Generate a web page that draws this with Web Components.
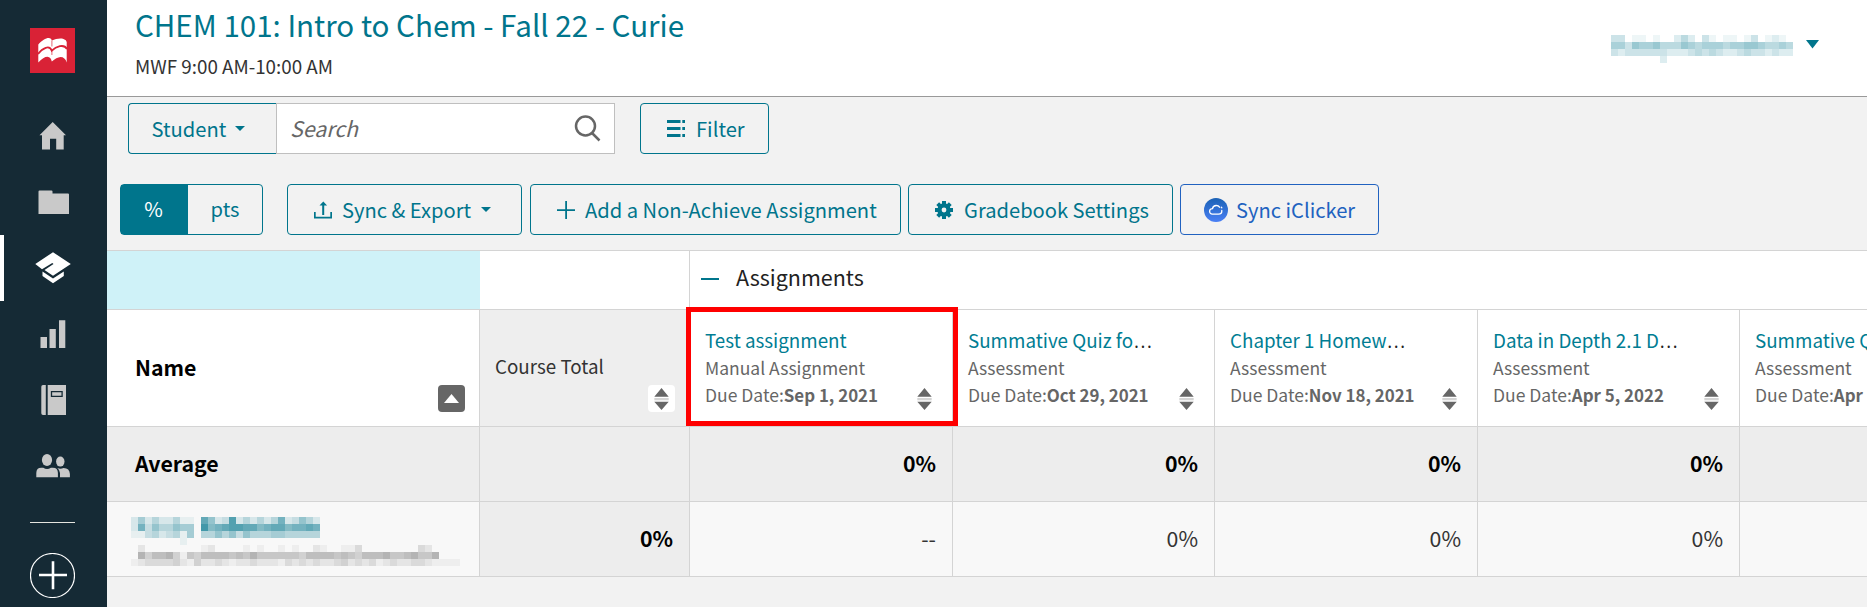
<!DOCTYPE html>
<html lang="en">
<head>
<meta charset="utf-8">
<title>Gradebook</title>
<style>
    body {
        margin: 0;
        width: 1867px;
        height: 607px;
        overflow: hidden;
        display: flex;
        background: #f2f2f2;
        color: #333;
        font-family: "Noto Sans CJK SC", "Noto Sans", sans-serif;
        font-size: 20.15px;
        --teal: #00758c;
        --line: #d4d4d4;
    }

    main {
        flex: 1;
        min-width: 0;
    }
</style>
</head>
<body>
<nav-rail></nav-rail>
<main>
    <course-header>
        <span slot="title">CHEM 101: Intro to Chem - Fall 22 - Curie</span>
        <span slot="schedule">MWF 9:00 AM-10:00 AM</span>
    </course-header>
    <grade-toolbar></grade-toolbar>
    <grade-table></grade-table>
</main>

<script>
const ICONS = {
    logo: [45, 45, `<rect width="45" height="45" fill="#d92236"/>
        <path fill="#fff" d="M8.300 16.500C12 12.500 16 9.800 19 10q2.500.2 2.900 2.600C25.500 11 30 10 33.500 11q3 .8 3.200 3v20.500q-1.700-5.500-6.200-5.500-4 .3-8.700 4.500-1-4.500-4.300-4.800-4 0-9.200 5.800z"/>
        <path fill="none" stroke="#d92236" stroke-width="1.800" d="M8 26C12.500 20 19.500 16.500 21.800 22.700 26 18.500 34 15.500 37 21"/>
        <path fill="none" stroke="#d92236" stroke-width=".7" d="M21.900 12.500v6M21.900 22v5"/>`],
    home: [28, 28, `<path d="M13.700 0 27 13.200h-2.300V27.500h-7.500V16.700H11v10.800H3V13.200H.5z"/>`],
    folder: [31, 25, `<path d="M.5 1.500Q.5.5 1.500.5h12q1 0 1 1v2H30q1 0 1 1V24H.5z"/>`],
    grades: [36, 32, `<path d="M18 .2 35.800 12 18 23.800 9.500 18 18.500 12l-1.200-.9L7 17.200.3 12z"/>
        <path d="m7.500 19.500 10.500 7 10.800-7V24L18 31.200 7.500 24z"/>`],
    bars: [26, 28, `<path d="M.5 17H7v11H.5zM9.500 9h6.300v19H9.500zM19 .3h6.300V28H19z"/>`],
    book: [25, 30, `<path d="M2 0h2.800v30H2q-1.700 0-1.700-1.700V1.700Q.3 0 2 0zM6.700 0H25v30H6.700z"/>
        <path fill="#c9c9c9" stroke="#152a35" stroke-width="1.300" d="M10.500 6.700h10.600v4.600H10.500z"/>`],
    people: [35, 24, `<ellipse cx="11" cy="6" rx="5.100" ry="5.900"/><ellipse cx="24.300" cy="7.600" rx="4.200" ry="5"/>
        <path d="M.3 23.300V19q0-5.300 5-5.300h2q3.700 2.400 7.600 0h2q5 0 5 5.300v4.300zM21.300 14q3 1.400 6.300 0 6 0 6.300 6v3.300H24V19q-.2-3-2.700-5z"/>`],
    add: [45, 45, `<circle cx="22.500" cy="22.500" r="22" fill="none" stroke="#fff" stroke-width="1.200"/>
        <path fill="none" stroke="#fff" stroke-width="2.600" d="M9 22h28M23 8.300v28"/>`],
    search: [27, 27, `<g fill="none" stroke="#666" stroke-width="2.500"><circle cx="11.500" cy="11" r="9.500"/><path d="m18 18 7.500 7.500"/></g>`],
    filter: [18, 18, `<path d="M0 0h13.500v3H0zM0 7h13.500v3H0zM0 14h13.500v3H0zM15.300 0H18v3h-2.700zM15.300 7H18v3h-2.700zM15.300 14H18v3h-2.700z"/>`],
    upload: [18, 18, `<path d="M0 11h1.700v4.700h14.600V11H18v6.500H0zM8.200 14V4.500H5.500L9.300.5l3.800 4h-2.900V14z"/>`],
    plus: [18, 18, `<path d="M8.200 0h1.800v8.200h8V10h-8v8H8.200v-8H0V8.200h8.200z"/>`],
    gear: [18, 18, `<path fill="none" stroke="currentColor" stroke-width="4" d="M9 0v18M0 9h18M2.700 2.700l12.600 12.600M15.300 2.700 2.700 15.300"/>
        <circle cx="9" cy="9" r="6.700"/><circle cx="9" cy="9" r="2.400" fill="#f2f2f2"/>`],
    clicker: [24, 24, `<defs><linearGradient id="g" x2="0" y2="1"><stop stop-color="#1b62b5"/><stop offset="1" stop-color="#4a80f5"/></linearGradient></defs>
        <circle cx="12" cy="12" r="12" fill="url(#g)"/>
        <path fill="none" stroke="#fff" stroke-width="1.300" stroke-linecap="round" d="M17.800 12.500q.3 3.700-3.300 3.700H8.300a2.800 2.800 0 0 1 .2-5.600q.5-3.100 3.700-3.100 2.300 0 3.300 1.700M17.300 9.200l.5.500"/>`],
    minus: [18, 2, `<path d="M0 0h18v2H0z"/>`],
    caret: [10, 5, `<path d="M0 0h10L5 5z"/>`],
    bigCaret: [13, 9, `<path d="M0 0h13L6.500 8.500z"/>`],
    up: [15, 9, `<path d="M7.500 0 15 9H0z"/>`],
    sort: [15, 22, `<path d="M7.500 0 14.700 8.700H.3zM.3 13.700h14.400L7.500 22z"/><path fill="#d4d4d4" d="M.3 10h14.400v2.300H.3z"/>`],
};

class UiIcon extends HTMLElement {
    connectedCallback() {
        const [width, height, body] = ICONS[this.getAttribute("name")];
        this.attachShadow({ mode: "open" }).innerHTML = `
            <style>
                :host { display: block; flex: none; width: ${width}px; height: ${height}px; }
                svg { display: block; fill: currentColor; }
            </style>
            <svg width="${width}" height="${height}" viewBox="0 0 ${width} ${height}">${body}</svg>
        `;
    }
}

// Hides a private name: each digit is the strength of one 7px square.
class PrivacyMask extends HTMLElement {
    connectedCallback() {
        const rows = this.getAttribute("rows").split(" ");
        const cols = Math.max(...rows.map((row) => row.length));
        const cells = rows.flatMap((row, y) =>
            [...row].map((v, x) =>
                `<rect x="${x * 7}" y="${y * 7}" width="7" height="7" opacity="${parseInt(v, 16) / 15}"/>`,
            ),
        );
        this.attachShadow({ mode: "open" }).innerHTML = `
            <style>
                :host { display: block; width: ${cols * 7}px; height: ${rows.length * 7}px; }
                svg { display: block; fill: currentColor; }
            </style>
            <svg width="${cols * 7}" height="${rows.length * 7}" shape-rendering="crispEdges">${cells.join("")}</svg>
        `;
    }
}

class NavItem extends HTMLElement {
    connectedCallback() {
        this.attachShadow({ mode: "open" }).innerHTML = `
            <style>
                :host {
                    box-sizing: border-box;
                    display: flex;
                    align-items: center;
                    justify-content: center;
                    height: 66px;
                    padding-right: 5px;
                    border-left: 4px solid transparent;
                    color: #c9c9c9;
                }
                :host([active]) { border-color: #fff; color: #fff; }
            </style>
            <ui-icon name="${this.getAttribute("icon")}"></ui-icon>
        `;
    }
}

class NavRail extends HTMLElement {
    connectedCallback() {
        this.attachShadow({ mode: "open" }).innerHTML = `
            <style>
                :host { display: block; flex: none; width: 107px; height: 607px; background: #152a35; }
                .logo { padding: 28px 0 30px 30px; }
                hr { width: 45px; height: 1px; margin: 23px 0 30px 30px; border: 0; background: #e5e5e0; }
                .add { margin-left: 30px; }
            </style>
            <div class="logo"><ui-icon name="logo"></ui-icon></div>
            <nav-item icon="home"></nav-item>
            <nav-item icon="folder"></nav-item>
            <nav-item icon="grades" active></nav-item>
            <nav-item icon="bars"></nav-item>
            <nav-item icon="book"></nav-item>
            <nav-item icon="people"></nav-item>
            <hr>
            <ui-icon class="add" name="add"></ui-icon>
        `;
    }
}

class CourseHeader extends HTMLElement {
    connectedCallback() {
        this.attachShadow({ mode: "open" }).innerHTML = `
            <style>
                :host {
                    box-sizing: border-box;
                    display: flex;
                    justify-content: space-between;
                    height: 97px;
                    padding: 0 48px 0 28px;
                    background: #fff;
                    border-bottom: 1px solid #999;
                }
                h1 { margin: 5px 0 0; font-size: 29.55px; font-weight: 400; line-height: 40px; color: var(--teal); }
                p { margin: 8px 0 0; font-size: 18.8px; line-height: 26px; }
                .user { display: flex; gap: 13px; padding-top: 35px; color: var(--teal); }
                .user ui-icon { margin-top: 5px; }
            </style>
            <div>
                <h1><slot name="title"></slot></h1>
                <p><slot name="schedule"></slot></p>
            </div>
            <div class="user">
                <privacy-mask rows="33011010024203101101301210 55365564446545554556654454 32333333222343432234332322 00000002"></privacy-mask>
                <ui-icon name="bigCaret"></ui-icon>
            </div>
        `;
    }
}

class ToolButton extends HTMLElement {
    connectedCallback() {
        const icon = this.getAttribute("icon");
        this.attachShadow({ mode: "open" }).innerHTML = `
            <style>
                :host {
                    box-sizing: border-box;
                    display: flex;
                    align-items: center;
                    gap: 11px;
                    height: 51px;
                    padding-left: 26px;
                    border: 1px solid currentColor;
                    border-radius: 4px;
                    color: var(--teal);
                    line-height: 48px;
                    white-space: nowrap;
                }
            </style>
            ${icon ? `<ui-icon name="${icon}"></ui-icon>` : ""}
            <span><slot></slot></span>
            ${this.hasAttribute("menu") ? `<ui-icon name="caret"></ui-icon>` : ""}
        `;
    }
}

class SearchField extends HTMLElement {
    connectedCallback() {
        this.attachShadow({ mode: "open" }).innerHTML = `
            <style>
                :host {
                    box-sizing: border-box;
                    display: flex;
                    align-items: center;
                    justify-content: space-between;
                    width: 339px;
                    height: 51px;
                    padding: 0 13px;
                    border: 1px solid #bfbfbf;
                    background: #fff;
                    color: #666;
                    line-height: 48px;
                }
                span { margin-bottom: 2px; font-style: italic; font-size: 21.3px; }
            </style>
            <span><slot></slot></span>
            <ui-icon name="search"></ui-icon>
        `;
    }
}

class UnitToggle extends HTMLElement {
    connectedCallback() {
        this.attachShadow({ mode: "open" }).innerHTML = `
            <style>
                :host {
                    box-sizing: border-box;
                    display: flex;
                    width: 143px;
                    height: 51px;
                    border: 1px solid var(--teal);
                    border-radius: 4px;
                    color: var(--teal);
                    line-height: 48px;
                    text-align: center;
                }
                .on { width: 67px; background: var(--teal); color: #fff; text-indent: -2px; }
                .off { flex: 1; }
            </style>
            <div class="on">%</div>
            <div class="off">pts</div>
        `;
    }
}

class GradeToolbar extends HTMLElement {
    connectedCallback() {
        this.attachShadow({ mode: "open" }).innerHTML = `
            <style>
                :host { display: block; height: 153px; }
                .row { display: flex; }
                .find { padding: 6px 0 0 21px; }
                .actions { padding: 30px 0 0 13px; }
                .student { width: 148px; padding-left: 22.5px; gap: 9px; border-right: 0; border-radius: 4px 0 0 4px; }
                .filter { width: 129px; margin-left: 25px; }
                .sync { width: 235px; margin: 0 8px 0 24px; gap: 10px; }
                .add { width: 371px; gap: 10px; margin-right: 7px; }
                .settings { width: 265px; margin-right: 7px; }
                .clicker { width: 199px; padding-left: 23px; gap: 8px; color: #2162c0; }
            </style>
            <div class="row find">
                <tool-button class="student" menu>Student</tool-button>
                <search-field>Search</search-field>
                <tool-button class="filter" icon="filter">Filter</tool-button>
            </div>
            <div class="row actions">
                <unit-toggle></unit-toggle>
                <tool-button class="sync" icon="upload" menu>Sync &amp; Export</tool-button>
                <tool-button class="add" icon="plus">Add a Non-Achieve Assignment</tool-button>
                <tool-button class="settings" icon="gear">Gradebook Settings</tool-button>
                <tool-button class="clicker" icon="clicker">Sync iClicker</tool-button>
            </div>
        `;
    }
}

class SortToggle extends HTMLElement {
    connectedCallback() {
        const ascending = this.hasAttribute("ascending");
        this.attachShadow({ mode: "open" }).innerHTML = `
            <style>
                :host {
                    display: flex;
                    flex: none;
                    align-items: center;
                    justify-content: center;
                    width: 27px;
                    height: 27px;
                    border-radius: 4px;
                    background: #fff;
                    color: #666;
                }
                :host([ascending]) { background: #666; color: #fff; }
            </style>
            <ui-icon name="${ascending ? "up" : "sort"}"></ui-icon>
        `;
    }
}

class AssignmentHead extends HTMLElement {
    connectedCallback() {
        const cut = this.hasAttribute("cut") ? `<span class="dots">…</span>` : "";
        this.attachShadow({ mode: "open" }).innerHTML = `
            <style>
                :host {
                    box-sizing: border-box;
                    display: flex;
                    align-items: flex-end;
                    justify-content: space-between;
                    padding: 0 14px 14px 15px;
                    font-size: 17.5px;
                    line-height: 27px;
                    color: #666;
                    white-space: nowrap;
                }
                .text { margin-bottom: 4px; }
                .title { height: 28px; font-size: 18.8px; color: #007d93; }
                .dots { color: #222; font-family: "Open Sans"; font-size: 27px; font-weight: 300; line-height: 0; }
                b { font-size: 16.9px; font-weight: 700; }
            </style>
            <div class="text">
                <div class="title">${this.getAttribute("title-text")}${cut}</div>
                <div>${this.getAttribute("kind")}</div>
                <div>Due Date:<b>${this.getAttribute("due")}</b></div>
            </div>
            <sort-toggle></sort-toggle>
        `;
    }
}

const ASSIGNMENTS = [
    { title: "Test assignment", kind: "Manual Assignment", due: "Sep 1, 2021", average: "0%", score: "--" },
    { title: "Summative Quiz fo", cut: true, kind: "Assessment", due: "Oct 29, 2021", average: "0%", score: "0%" },
    { title: "Chapter 1 Homew", cut: true, kind: "Assessment", due: "Nov 18, 2021", average: "0%", score: "0%" },
    { title: "Data in Depth 2.1 D", cut: true, kind: "Assessment", due: "Apr 5, 2022", average: "0%", score: "0%" },
    { title: "Summative Q", kind: "Assessment", due: "Apr", average: "", score: "" },
];

class GradeTable extends HTMLElement {
    connectedCallback() {
        const heads = ASSIGNMENTS.map((a) =>
            `<assignment-head class="cell" title-text="${a.title}" kind="${a.kind}" due="${a.due}" ${a.cut ? "cut" : ""}></assignment-head>`,
        ).join("");
        this.attachShadow({ mode: "open" }).innerHTML = `
            <style>
                :host {
                    display: block;
                    position: relative;
                    width: 1760px;
                    overflow: hidden;
                    border-top: 1px solid var(--line);
                }
                .row {
                    display: grid;
                    grid-template-columns: 373px 210px 263px 262px 263px 262px 262px;
                }
                .cell {
                    box-sizing: border-box;
                    border-right: 1px solid var(--line);
                    border-bottom: 1px solid var(--line);
                }
                .group { height: 59px; line-height: 50px; background: #fff; color: #222; font-size: 21.5px; }
                .group .cyan { background: #cff2f8; border-right: 0; }
                .group .all { grid-column: 3 / -1; display: flex; align-items: center; gap: 17px; padding-left: 11px; }
                .group span { margin-bottom: 6px; }
                .group ui-icon { color: var(--teal); margin-bottom: 2px; }
                .heads { height: 117px; background: #fff; }
                .heads .name, .heads .total { display: flex; justify-content: space-between; align-items: flex-end; padding: 0 14px 14px 28px; }
                .name strong { line-height: 30px; margin-bottom: 30px; color: #000; font-size: 21.3px; }
                .heads .total { padding-left: 15px; background: #eee; font-size: 18.8px; }
                .total span { line-height: 27px; margin-bottom: 33px; }
                .average, .student { height: 75px; line-height: 71px; text-align: right; font-size: 21.3px; }
                .average .cell, .student .cell { padding-right: 16px; }
                .average { background: #ededed; color: #000; font-weight: 700; }
                .average .label { text-align: left; padding-left: 28px; }
                .student { background: #f8f8f8; }
                .student .total { background: #ededed; color: #000; font-weight: 700; }
                .student .who { padding: 15px 0 0 24px; }
                .who .first { color: #00758c; }
                .who .mail { color: #666; }
                .marker {
                    position: absolute;
                    box-sizing: border-box;
                    left: 579px;
                    top: 56px;
                    width: 272px;
                    height: 119px;
                    border: 5px solid #f00;
                }
            </style>
            <div class="row group">
                <div class="cell cyan"></div>
                <div class="cell"></div>
                <div class="cell all"><ui-icon name="minus"></ui-icon><span>Assignments</span></div>
            </div>
            <div class="row heads">
                <div class="cell name"><strong>Name</strong><sort-toggle ascending></sort-toggle></div>
                <div class="cell total"><span>Course Total</span><sort-toggle></sort-toggle></div>
                ${heads}
            </div>
            <div class="row average">
                <div class="cell label">Average</div>
                <div class="cell"></div>
                ${ASSIGNMENTS.map((a) => `<div class="cell">${a.average}</div>`).join("")}
            </div>
            <div class="row student">
                <div class="cell who">
                    <privacy-mask class="first" rows="25242241109623a242424823642 2836446550b789aa99789978898 113423415044646364445544444 00000001"></privacy-mask>
                    <privacy-mask class="mail" rows="0200000000120000101001010021001130000000032 07466741546666565755555546666565466675567557 12333342142232122322213232322342323123223321111"></privacy-mask>
                </div>
                <div class="cell total">0%</div>
                ${ASSIGNMENTS.map((a) => `<div class="cell">${a.score}</div>`).join("")}
            </div>
            <div class="marker"></div>
        `;
    }
}

customElements.define("ui-icon", UiIcon);
customElements.define("privacy-mask", PrivacyMask);
customElements.define("nav-item", NavItem);
customElements.define("nav-rail", NavRail);
customElements.define("course-header", CourseHeader);
customElements.define("tool-button", ToolButton);
customElements.define("search-field", SearchField);
customElements.define("unit-toggle", UnitToggle);
customElements.define("grade-toolbar", GradeToolbar);
customElements.define("sort-toggle", SortToggle);
customElements.define("assignment-head", AssignmentHead);
customElements.define("grade-table", GradeTable);
</script>
</body>
</html>
